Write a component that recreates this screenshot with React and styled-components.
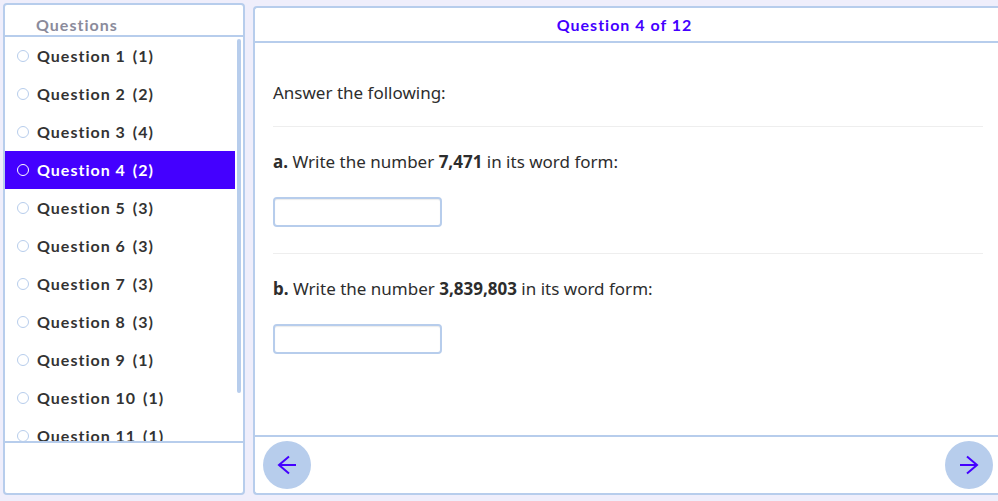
import React, { useState } from 'react';
import styled, { createGlobalStyle } from 'styled-components';

const GlobalStyle = createGlobalStyle`
  * {
    box-sizing: border-box;
  }

  body {
    margin: 0;
    background: #efeefb;
    overflow: hidden;
  }
`;

const Page = styled.div`
  display: grid;
  grid-template-columns: 242px 1fr;
  gap: 8px;
  height: 100vh;
  padding: 3px 0 6px 3px;
  font-family: Lato, sans-serif;
`;

const Sidebar = styled.aside`
  display: flex;
  flex-direction: column;
  min-height: 0;
  background: #ffffff;
  border: 2px solid #b7cdec;
  border-radius: 4px;
`;

const SidebarTitle = styled.h2`
  height: 32px;
  margin: 0;
  padding-left: 31px;
  border-bottom: 2px solid #b7cdec;
  color: #8b8b9b;
  font-size: 16px;
  font-weight: 700;
  line-height: 40px;
  letter-spacing: 1px;
`;

const ListArea = styled.nav`
  display: flex;
  flex: 1;
  justify-content: space-between;
  min-height: 0;
  padding-right: 2px;
`;

const List = styled.ul`
  flex: 1;
  margin: 0;
  padding: 0;
  overflow-y: auto;
  scrollbar-width: none;
  list-style: none;
`;

const Item = styled.button`
  display: flex;
  align-items: center;
  gap: 8px;
  width: 100%;
  height: 38px;
  padding: 0 12px;
  border: 0;
  background: ${props => (props.$active ? '#4400ff' : 'transparent')};
  color: ${props => (props.$active ? '#ffffff' : '#333333')};
  font-family: inherit;
  font-size: 16px;
  font-weight: 700;
  letter-spacing: 1px;
  cursor: pointer;
`;

const Label = styled.span`
  display: flex;
  gap: 7px;
  padding-bottom: 2px;
`;

const Dot = styled.span`
  width: 12px;
  height: 12px;
  border: 1px solid ${props => (props.$active ? '#ffffff' : '#b7cdec')};
  border-radius: 50%;
`;

const ScrollThumb = styled.div`
  width: 4px;
  height: 354px;
  margin: 2px 0 0 2px;
  border-radius: 2px;
  background: #b7cdec;
`;

const SidebarFooter = styled.div`
  height: 52px;
  border-top: 2px solid #b7cdec;
`;

const Main = styled.main`
  display: flex;
  flex-direction: column;
  min-width: 0;
  margin-top: 3px;
  background: #ffffff;
  border: 2px solid #b7cdec;
  border-right: 0;
  border-radius: 4px 0 0 4px;
`;

const MainTitle = styled.h1`
  height: 35px;
  margin: 0;
  padding-right: 4px;
  border-bottom: 2px solid #b7cdec;
  color: #4400ff;
  font-size: 16px;
  font-weight: 700;
  line-height: 34px;
  letter-spacing: 1px;
  text-align: center;
`;

const Content = styled.div`
  flex: 1;
  padding: 36px 15px 0 18px;
  color: #2d2d2d;
  font-family: 'Noto Sans', sans-serif;
  font-size: 17px;
  line-height: 28px;
`;

const Intro = styled.p`
  margin: 0 0 19px;
`;

const Part = styled.section`
  padding: 21px 0 26px;
  border-top: 1px solid #eeeeee;
`;

const Answer = styled.input`
  display: block;
  width: 169px;
  height: 30px;
  margin-top: 21px;
  padding: 0 8px;
  border: 2px solid #b7cdec;
  border-radius: 4px;
  box-shadow: inset 0 1px 1px rgba(0, 0, 0, 0.08);
  font: inherit;
`;

const Footer = styled.footer`
  display: flex;
  justify-content: space-between;
  height: 58px;
  padding: 4px 5px 4px 8px;
  border-top: 2px solid #b7cdec;
`;

const RoundButton = styled.button`
  display: flex;
  align-items: center;
  justify-content: center;
  width: 48px;
  height: 48px;
  padding: 0;
  border: 0;
  border-radius: 50%;
  background: #b7cdec;
  color: #4400ff;
  cursor: pointer;
`;

const marks = [1, 2, 4, 2, 3, 3, 3, 3, 1, 1, 1, 2];

const parts = [
  { id: 'a', number: '7,471' },
  { id: 'b', number: '3,839,803' },
];

const Arrow = ({ right }) => (
  <svg width="20" height="20" viewBox="0 0 20 20" fill="none" stroke="currentColor" strokeWidth="2">
    <path d={right ? 'M1 10H18M8 1.5L18 10L8 18.5' : 'M19 10H2M12 1.5L2 10L12 18.5'} />
  </svg>
);

const App = () => {
  const [current, setCurrent] = useState(4);

  return (
    <>
      <GlobalStyle />
      <Page>
        <Sidebar>
          <SidebarTitle>Questions</SidebarTitle>
          <ListArea aria-label="Questions">
            <List>
              {marks.map((mark, i) => (
                <li key={i}>
                  <Item
                    type="button"
                    $active={current === i + 1}
                    onClick={() => setCurrent(i + 1)}
                  >
                    <Dot $active={current === i + 1} />
                    <Label>
                      <span>{`Question ${i + 1}`}</span>
                      <span>{`(${mark})`}</span>
                    </Label>
                  </Item>
                </li>
              ))}
            </List>
            <ScrollThumb />
          </ListArea>
          <SidebarFooter />
        </Sidebar>
        <Main>
          <MainTitle>{`Question ${current} of ${marks.length}`}</MainTitle>
          <Content>
            <Intro>Answer the following:</Intro>
            {parts.map(({ id, number }) => (
              <Part key={id}>
                <label htmlFor={`answer-${id}`}>
                  <b>{id}.</b> Write the number <b>{number}</b> in its word form:
                </label>
                <Answer id={`answer-${id}`} type="text" />
              </Part>
            ))}
          </Content>
          <Footer>
            <RoundButton
              type="button"
              aria-label="Previous question"
              onClick={() => setCurrent(Math.max(1, current - 1))}
            >
              <Arrow />
            </RoundButton>
            <RoundButton
              type="button"
              aria-label="Next question"
              onClick={() => setCurrent(Math.min(marks.length, current + 1))}
            >
              <Arrow right />
            </RoundButton>
          </Footer>
        </Main>
      </Page>
    </>
  );
};

export default App;
